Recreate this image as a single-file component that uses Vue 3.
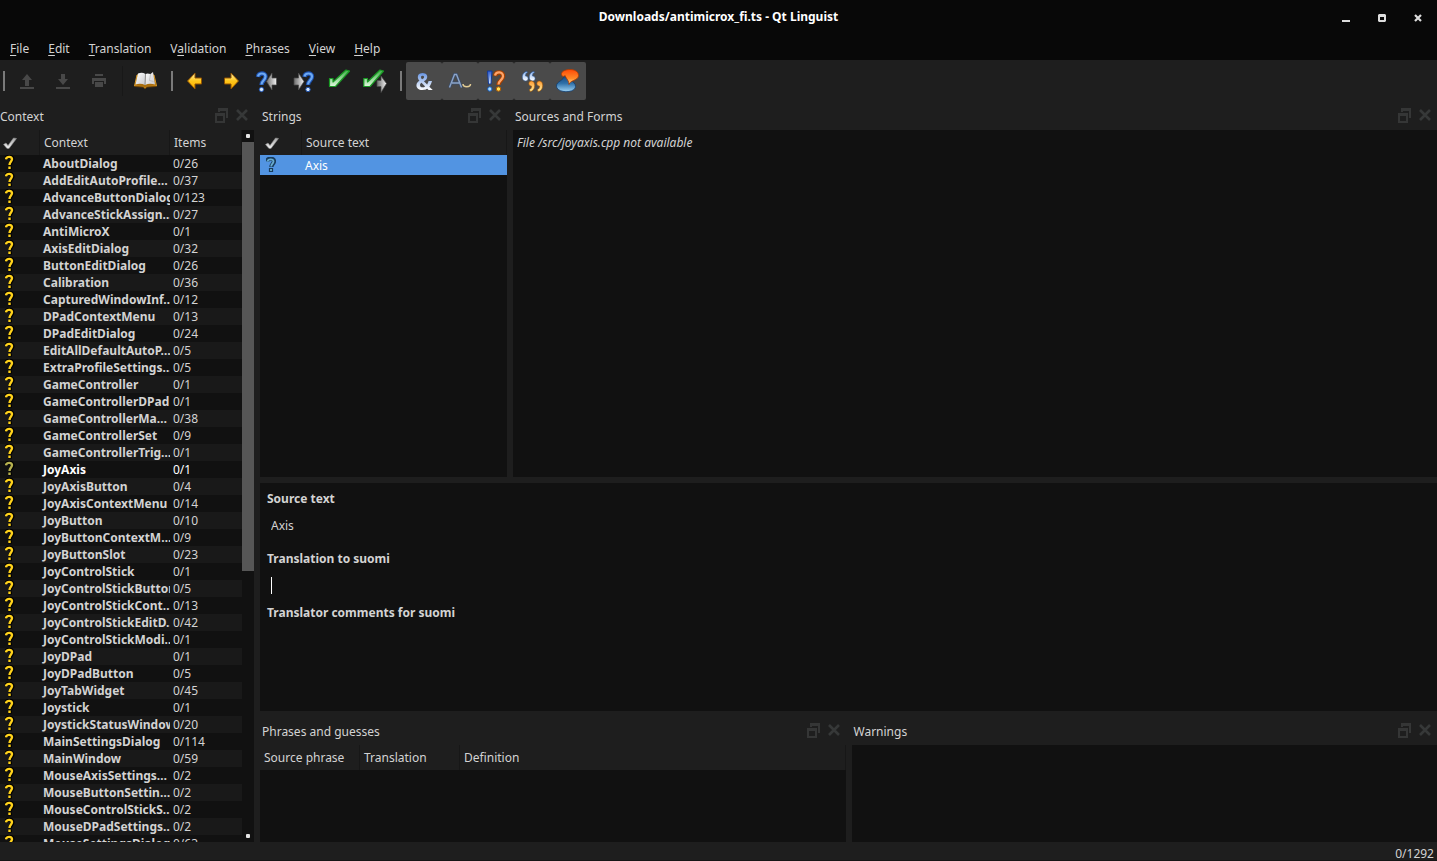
<script setup>
import { ref } from 'vue'

const menus = [
  ['', 'F', 'ile'],
  ['', 'E', 'dit'],
  ['', 'T', 'ranslation'],
  ['V', 'a', 'lidation'],
  ['', 'P', 'hrases'],
  ['', 'V', 'iew'],
  ['', 'H', 'elp'],
]

const navigation = [
  ['prev', 'Previous'],
  ['next', 'Next'],
  ['prev-unfinished', 'Previous unfinished'],
  ['next-unfinished', 'Next unfinished'],
  ['done', 'Mark as done'],
  ['done-next', 'Done and next'],
]

const checks = [
  ['accelerators', 'Accelerators'],
  ['whitespace', 'Surrounding whitespace'],
  ['punctuation', 'Ending punctuation'],
  ['phrase-matches', 'Phrase matches'],
  ['place-markers', 'Place marker matches'],
]

const contexts = [
  ['AboutDialog', '0/26'],
  ['AddEditAutoProfile…', '0/37'],
  ['AdvanceButtonDialog', '0/123'],
  ['AdvanceStickAssign…', '0/27'],
  ['AntiMicroX', '0/1'],
  ['AxisEditDialog', '0/32'],
  ['ButtonEditDialog', '0/26'],
  ['Calibration', '0/36'],
  ['CapturedWindowInf…', '0/12'],
  ['DPadContextMenu', '0/13'],
  ['DPadEditDialog', '0/24'],
  ['EditAllDefaultAutoP…', '0/5'],
  ['ExtraProfileSettings…', '0/5'],
  ['GameController', '0/1'],
  ['GameControllerDPad', '0/1'],
  ['GameControllerMa…', '0/38'],
  ['GameControllerSet', '0/9'],
  ['GameControllerTrig…', '0/1'],
  ['JoyAxis', '0/1'],
  ['JoyAxisButton', '0/4'],
  ['JoyAxisContextMenu', '0/14'],
  ['JoyButton', '0/10'],
  ['JoyButtonContextM…', '0/9'],
  ['JoyButtonSlot', '0/23'],
  ['JoyControlStick', '0/1'],
  ['JoyControlStickButton', '0/5'],
  ['JoyControlStickCont…', '0/13'],
  ['JoyControlStickEditD…', '0/42'],
  ['JoyControlStickModi…', '0/1'],
  ['JoyDPad', '0/1'],
  ['JoyDPadButton', '0/5'],
  ['JoyTabWidget', '0/45'],
  ['Joystick', '0/1'],
  ['JoystickStatusWindow', '0/20'],
  ['MainSettingsDialog', '0/114'],
  ['MainWindow', '0/59'],
  ['MouseAxisSettings…', '0/2'],
  ['MouseButtonSettin…', '0/2'],
  ['MouseControlStickS…', '0/2'],
  ['MouseDPadSettings…', '0/2'],
  ['MouseSettingsDialog', '0/63'],
]

const current = ref('JoyAxis')
const translation = ref('')
const comments = ref('')
</script>

<template>
  <div class="window">
    <svg class="defs" width="0" height="0" aria-hidden="true">
      <defs>
        <linearGradient id="gold" x1="0" y1="0" x2="0" y2="1">
          <stop offset="0" stop-color="#fff3b0" />
          <stop offset="0.5" stop-color="#ffc61a" />
          <stop offset="1" stop-color="#ffb000" />
        </linearGradient>
        <linearGradient id="silver" x1="0" y1="0" x2="1" y2="0">
          <stop offset="0" stop-color="#6e6e6e" />
          <stop offset="1" stop-color="#f4f4f4" />
        </linearGradient>
        <linearGradient id="green" x1="0" y1="0" x2="0" y2="1">
          <stop offset="0" stop-color="#3fae48" />
          <stop offset="1" stop-color="#e0fade" />
        </linearGradient>
        <linearGradient id="blue" x1="0" y1="0" x2="0" y2="1">
          <stop offset="0" stop-color="#2a58d0" />
          <stop offset="1" stop-color="#d8ecff" />
        </linearGradient>
        <linearGradient id="steel" x1="0" y1="0" x2="0" y2="1">
          <stop offset="0" stop-color="#8db4ec" />
          <stop offset="1" stop-color="#ffffff" />
        </linearGradient>
        <linearGradient id="amber" x1="0" y1="0" x2="0" y2="1">
          <stop offset="0" stop-color="#ff9a30" />
          <stop offset="1" stop-color="#fff0a0" />
        </linearGradient>
        <linearGradient id="fire" x1="0" y1="0" x2="0" y2="1">
          <stop offset="0" stop-color="#ff4a08" />
          <stop offset="0.6" stop-color="#ff8a28" />
          <stop offset="1" stop-color="#ffe9a0" />
        </linearGradient>
        <linearGradient id="ocean" x1="0" y1="0" x2="0" y2="1">
          <stop offset="0" stop-color="#12427c" />
          <stop offset="0.5" stop-color="#2f70a8" />
          <stop offset="1" stop-color="#9cd2f4" />
        </linearGradient>
        <linearGradient id="page" x1="0" y1="0" x2="1" y2="1">
          <stop offset="0" stop-color="#ffffff" />
          <stop offset="1" stop-color="#c8c8cc" />
        </linearGradient>
        <linearGradient id="metal" x1="0" y1="0" x2="0" y2="1">
          <stop offset="0" stop-color="#a8a8a8" />
          <stop offset="1" stop-color="#f0f0f0" />
        </linearGradient>
      </defs>

      <symbol id="i-open" viewBox="0 0 24 24">
        <path d="M12 5l5 6h-3v6h-4v-6H7zM5 18h14v2H5z" fill="#484848" />
      </symbol>
      <symbol id="i-save" viewBox="0 0 24 24">
        <path d="M10 5h4v5h3l-5 6-5-6h3zM5 18h14v2H5z" fill="#484848" />
      </symbol>
      <symbol id="i-print" viewBox="0 0 24 24">
        <path d="M8 5h8v2H8zM5 9h14v6h-2v-3H7v3H5zM8 13h8v5H8z" fill="#484848" />
      </symbol>
      <symbol id="i-book" viewBox="0 0 24 24">
        <path d="M4 6L1.500 17l8.500.5 2 2 2-2 9.500-.5L21 6z" fill="#a96d0c" stroke="#d99a26" stroke-linejoin="round" />
        <path d="M5 4.500c3-1 5-1 7.500.5L12 16c-3-1.500-6-1.500-9.500-.5z" fill="url(#page)" />
        <path d="M12.500 5c2-1 3-.5 5 0L20 3l2 12.500c-3.500-1-7-1-10 .5z" fill="url(#page)" />
        <path d="M12.500 5L12 16" stroke="#8c8c8c" />
        <path d="M17.500 5l-1 6.500 4 1" fill="none" stroke="#b4b4b4" stroke-width="0.700" />
        <path d="M2 17.500l8 .5 2 2 2-2 9-.5" fill="none" stroke="#6b4208" />
      </symbol>
      <symbol id="i-prev" viewBox="0 0 24 24">
        <path d="M4.500 12L12 4v5h6.500v6H12v5z" fill="url(#gold)" stroke="#925300" stroke-linejoin="round" />
      </symbol>
      <symbol id="i-next" viewBox="0 0 24 24">
        <path d="M19.500 12L12 4v5H5.500v6H12v5z" fill="url(#gold)" stroke="#925300" stroke-linejoin="round" />
      </symbol>
      <symbol id="i-prev-unfinished" viewBox="0 0 24 24">
        <path d="M11.500 12.500L17 4v5h4.500v7H17v5z" fill="url(#silver)" stroke="#4b4b4b" stroke-width="0.700" />
        <path d="M3 8c.5-4.500 7.500-4.500 7.500-.5 0 4-4 4-4 8.500" fill="none" stroke="#1c50ac" stroke-width="4.400" />
        <path d="M3 7.500c.5-4 7.500-4 7.500 0 0 4-4 4-4 8" fill="none" stroke="#6ca8f2" stroke-width="2.200" />
        <circle cx="6.500" cy="20.500" r="2.200" fill="#d4e8ff" stroke="#1c50ac" />
      </symbol>
      <symbol id="i-next-unfinished" viewBox="0 0 24 24">
        <path d="M13 12.500L7.500 4v5H3v7h4.500v5z" fill="url(#silver)" stroke="#4b4b4b" stroke-width="0.700" />
        <path d="M13.500 8c.5-4.500 7.500-4.500 7.500-.5 0 4-4 4-4 8.500" fill="none" stroke="#1c50ac" stroke-width="4.400" />
        <path d="M13.500 7.500c.5-4 7.500-4 7.500 0 0 4-4 4-4 8" fill="none" stroke="#6ca8f2" stroke-width="2.200" />
        <circle cx="17" cy="20.500" r="2.200" fill="#d4e8ff" stroke="#1c50ac" />
      </symbol>
      <symbol id="i-done" viewBox="0 0 24 24">
        <path d="M2.500 9.500h3.500v3.500L19 1l3.500 1L8.500 17.500H2.500z" fill="url(#green)" stroke="#1a9a24" stroke-width="1.200" stroke-linejoin="round" />
      </symbol>
      <symbol id="i-done-next" viewBox="0 0 24 24">
        <path d="M23.500 14.500l-5.500-7.500v4.500H14v6h4v6z" fill="url(#silver)" stroke="#4b4b4b" stroke-width="0.700" />
        <path d="M.8 9.500h3.700v3.500L17 1l3.500 1L7 17.500H.8z" fill="url(#green)" stroke="#1a9a24" stroke-width="1.200" stroke-linejoin="round" />
      </symbol>
      <symbol id="i-whitespace" viewBox="0 0 24 24">
        <path d="M1.500 18.500L6.500 5.500h2l5 13M4 14h7.500" fill="none" stroke="#3a4c68" stroke-width="2.800" />
        <path d="M1.500 18.500L6.500 5.500h2l5 13M4 14h7.500" fill="none" stroke="#8ca4c8" stroke-width="1.400" />
        <path d="M15 15c0 3.500 7.500 3.500 7.500 0" fill="none" stroke="#e2cc94" stroke-width="1.500" />
      </symbol>
      <symbol id="i-punctuation" viewBox="0 0 24 24">
        <path d="M3.500 2h4.500L7 15H4.500z" fill="url(#blue)" stroke="#123a9a" />
        <circle cx="5.800" cy="20" r="2.200" fill="#a6dcff" stroke="#1558b8" />
        <path d="M11 7c1-5 8.500-4.500 8 .5-.5 4-4.500 4-4.500 8.500" fill="none" stroke="#a64000" stroke-width="4.400" />
        <path d="M11 6.500c1-4.500 8.500-4 8 1-.5 4-4.500 4-4.500 8" fill="none" stroke="#ffa468" stroke-width="2.200" />
        <circle cx="14.500" cy="20" r="2.200" fill="#ffe35a" stroke="#b65c00" />
      </symbol>
      <symbol id="i-phrase-matches" viewBox="0 0 24 24">
        <g fill="url(#steel)" stroke="#2b5a9c" stroke-width="0.600">
          <path d="M7 2.500C1 3 1 12 5.500 12 9 12 9 7 5.500 7c0-2 .5-3 2-3.500z" />
          <path d="M14 2.500C8 3 8 12 12.500 12 16 12 16 7 12.500 7c0-2 .5-3 2-3.500z" />
        </g>
        <g fill="url(#amber)" stroke="#a65800" stroke-width="0.600">
          <path d="M10 22.500c6-.5 6-10.500 1.500-10.500C8 12 8 17 11.500 17c0 2-.5 3-2 3.500z" />
          <path d="M18 22.500c6-.5 6-10.500 1.500-10.500C16 12 16 17 19.500 17c0 2-.5 3-2 3.500z" />
        </g>
      </symbol>
      <symbol id="i-place-markers" viewBox="0 0 24 24">
        <path d="M8.500 6c.5 5 11 5 11 11.500 0 7-19 7-19-.5C.5 12 8 12 8.500 6z" fill="url(#ocean)" stroke="#123e70" stroke-width="0.800" />
        <path d="M13 15.500C13.500 12.500 10.500 10 9 6.500 8 8 5.500 7.500 5.500 5c0-5.500 17-7 17 1.500C22.500 11.500 14 11 13 15.500z" fill="url(#fire)" stroke="#b33b00" stroke-width="0.800" />
      </symbol>
      <symbol id="i-tick" viewBox="0 0 16 14">
        <path d="M1.500 8.500L4 7l2 2.500L11.500 2l3 .5-7.500 10H5z" fill="url(#metal)" stroke="#8c8c8c" stroke-width="0.600" />
      </symbol>
      <symbol id="i-question" viewBox="0 0 10 15">
        <path d="M1 4.500C1.500.8 8 .8 7.500 4.500 7 7 5 7 5 10.500M5 11.500v3" fill="none" stroke="#000" stroke-width="4" />
        <path d="M1 4.300C1.500 1.200 7.200 1 7 4.300 6.800 6.800 4.500 7 4.500 10M4.500 11.500v2.500" fill="none" stroke="currentColor" stroke-width="2.400" />
      </symbol>
      <symbol id="i-question-outline" viewBox="0 0 10 15">
        <path d="M1 4.500C1.500.8 8.300.8 8 4.500 7.500 7 5.400 7 5.400 10M5 11v4" fill="none" stroke="#183c5c" stroke-width="4.200" />
        <path d="M1.500 4.500C2 1.600 7.500 1.600 7.500 4.500 7 7 5.200 7 5.200 9.500M5 12v2" fill="none" stroke="#68acd0" stroke-width="1.800" />
      </symbol>
      <symbol id="i-float" viewBox="0 0 14 15">
        <path d="M3 0h10v10h-2V3H5v1H3zM0 5h10v10H0zM2 8v5h6V8z" fill="#353636" fill-rule="evenodd" />
      </symbol>
      <symbol id="i-close" viewBox="0 0 14 14">
        <path d="M2 2l10 10M12 2L2 12" stroke="#363838" stroke-width="2.600" />
      </symbol>
    </svg>

    <header class="titlebar">
      <h1>Downloads/antimicrox_fi.ts - Qt Linguist</h1>
      <div class="controls">
        <button aria-label="Minimize"><svg width="8" height="8"><path d="M0 6h8v2H0z" fill="#ddd" /></svg></button>
        <button aria-label="Maximize"><svg width="8" height="8"><path d="M0 1l1-1h6l1 1v6l-1 1H1L0 7zM2 3v3h4V3z" fill="#ddd" fill-rule="evenodd" /></svg></button>
        <button aria-label="Close"><svg width="8" height="8"><path d="M1 1l6 6M7 1L1 7" stroke="#ddd" stroke-width="2.200" /></svg></button>
      </div>
    </header>

    <nav class="menubar">
      <button v-for="[before, key, after] in menus" :key="after">{{ before }}<span class="mnemonic">{{ key }}</span>{{ after }}</button>
    </nav>

    <div class="toolbar">
      <div class="group">
        <span class="handle"></span>
        <button class="tool" aria-label="Open" disabled><svg><use href="#i-open" /></svg></button>
        <button class="tool" aria-label="Save" disabled><svg><use href="#i-save" /></svg></button>
        <button class="tool" aria-label="Print" disabled><svg><use href="#i-print" /></svg></button>
        <span class="separator"></span>
        <button class="tool" aria-label="Open phrase book"><svg><use href="#i-book" /></svg></button>
      </div>
      <div class="group">
        <span class="handle"></span>
        <button v-for="[icon, label] in navigation" :key="icon" class="tool" :aria-label="label">
          <svg><use :href="'#i-' + icon" /></svg>
        </button>
      </div>
      <div class="group">
        <span class="handle"></span>
        <button v-for="[icon, label] in checks" :key="icon" class="tool pressed" :aria-label="label" aria-pressed="true">
          <span v-if="icon === 'accelerators'" class="ampersand">&amp;</span>
          <svg v-else><use :href="'#i-' + icon" /></svg>
        </button>
      </div>
    </div>

    <main class="workspace">
      <section class="dock context">
        <div class="dock-title">
          <h2>Context</h2>
          <button aria-label="Float Context"><svg class="float"><use href="#i-float" /></svg></button>
          <button aria-label="Close Context"><svg class="close"><use href="#i-close" /></svg></button>
        </div>
        <div class="dock-body scrollable">
          <table class="context-table">
            <colgroup><col class="col-state"><col class="col-name"><col></colgroup>
            <thead>
              <tr>
                <th class="state" aria-label="State"><svg class="tick"><use href="#i-tick" /></svg></th>
                <th>Context</th>
                <th>Items</th>
              </tr>
            </thead>
            <tbody>
              <tr v-for="[name, items] in contexts" :key="name" :class="{ current: name === current }" @click="current = name">
                <td><svg class="question"><use href="#i-question" /></svg></td>
                <td class="name">{{ name }}</td>
                <td>{{ items }}</td>
              </tr>
            </tbody>
          </table>
          <div class="scrollbar">
            <span class="arrow"></span>
            <div class="track"><div class="thumb"></div></div>
            <span class="arrow"></span>
          </div>
        </div>
      </section>

      <div class="main-column">
        <div class="row">
          <section class="dock strings">
            <div class="dock-title">
              <h2>Strings</h2>
              <button aria-label="Float Strings"><svg class="float"><use href="#i-float" /></svg></button>
              <button aria-label="Close Strings"><svg class="close"><use href="#i-close" /></svg></button>
            </div>
            <div class="dock-body">
              <table class="strings-table">
                <colgroup><col class="col-state"><col></colgroup>
                <thead>
                  <tr>
                    <th aria-label="State"><svg class="tick"><use href="#i-tick" /></svg></th>
                    <th>Source text</th>
                  </tr>
                </thead>
                <tbody>
                  <tr class="selected">
                    <td><svg class="question"><use href="#i-question-outline" /></svg></td>
                    <td>Axis</td>
                  </tr>
                </tbody>
              </table>
            </div>
          </section>

          <section class="dock sources">
            <div class="dock-title">
              <h2>Sources and Forms</h2>
              <button aria-label="Float Sources and Forms"><svg class="float"><use href="#i-float" /></svg></button>
              <button aria-label="Close Sources and Forms"><svg class="close"><use href="#i-close" /></svg></button>
            </div>
            <div class="dock-body">
              <p class="notice">File /src/joyaxis.cpp not available</p>
            </div>
          </section>
        </div>

        <form class="editor" @submit.prevent>
          <label for="source">Source text</label>
          <input id="source" class="field" type="text" value="Axis" readonly>
          <label for="translation">Translation to suomi</label>
          <div class="caret-field">
            <input id="translation" v-model="translation" class="field" type="text">
            <span v-if="!translation" class="caret"></span>
          </div>
          <label for="comments">Translator comments for suomi</label>
          <textarea id="comments" v-model="comments" class="field"></textarea>
        </form>

        <div class="row">
          <section class="dock">
            <div class="dock-title">
              <h2>Phrases and guesses</h2>
              <button aria-label="Float Phrases and guesses"><svg class="float"><use href="#i-float" /></svg></button>
              <button aria-label="Close Phrases and guesses"><svg class="close"><use href="#i-close" /></svg></button>
            </div>
            <div class="dock-body">
              <table class="phrases-table">
                <colgroup><col class="col-phrase"><col class="col-phrase"><col></colgroup>
                <thead>
                  <tr><th>Source phrase</th><th>Translation</th><th>Definition</th></tr>
                </thead>
              </table>
            </div>
          </section>

          <section class="dock">
            <div class="dock-title">
              <h2>Warnings</h2>
              <button aria-label="Float Warnings"><svg class="float"><use href="#i-float" /></svg></button>
              <button aria-label="Close Warnings"><svg class="close"><use href="#i-close" /></svg></button>
            </div>
            <div class="dock-body"></div>
          </section>
        </div>
      </div>
    </main>

    <footer class="statusbar">0/1292</footer>
  </div>
</template>

<style>
body {
  background: #1e1e1e;
}
</style>

<style scoped>
.window {
  display: flex;
  flex-direction: column;
  height: 100vh;
  overflow: hidden;
  background: #1e1e1e;
  color: #d3d3d3;
  font: 12px/17px "Noto Sans", sans-serif;
}
.window * {
  box-sizing: border-box;
}
.defs {
  position: absolute;
}
button {
  padding: 0;
  border: 0;
  background: none;
  color: inherit;
  font: inherit;
}
h1,
h2,
p {
  margin: 0;
  font-size: 12px;
}
svg {
  display: block;
}

.titlebar {
  display: grid;
  grid-template-columns: 1fr auto 1fr;
  flex: none;
  height: 36px;
  background: #080808;
}
.titlebar h1 {
  grid-column: 2;
  color: #fff;
  font-weight: 700;
  line-height: 34px;
}
.controls {
  display: flex;
  justify-content: flex-end;
  padding-right: 1px;
}
.controls button {
  display: grid;
  place-items: center;
  width: 36px;
  height: 36px;
}
.menubar {
  display: flex;
  flex: none;
  height: 24px;
  padding-left: 1px;
  background: #080808;
}
.menubar button {
  padding: 0 10px 0 9px;
}
.mnemonic {
  text-decoration: underline;
  text-decoration-thickness: 1px;
  text-underline-offset: 2px;
}

.toolbar {
  display: flex;
  flex: none;
  gap: 5px;
  height: 42px;
  padding: 2px 0 2px 3px;
}
.group {
  display: flex;
  align-items: center;
  padding-right: 3px;
}
.group:nth-child(2) {
  padding-right: 2px;
}
.handle {
  width: 2px;
  height: 20px;
  margin-right: 4px;
  background: #7a7a7a;
}
.separator {
  width: 1px;
  height: 30px;
  margin: 0 4px 0 5px;
  background: #181818;
}
.tool {
  display: grid;
  place-items: center;
  width: 36px;
  height: 38px;
}
.tool svg {
  width: 24px;
  height: 24px;
}
.pressed {
  border-radius: 2px;
  background: #4a4a4a;
}
.ampersand {
  background: linear-gradient(#6c98e4 25%, #ffffff 80%);
  background-clip: text;
  color: transparent;
  font: 700 23px/30px "Noto Sans", sans-serif;
}

.workspace {
  display: flex;
  flex: 1;
  gap: 6px;
  min-height: 0;
}
.dock {
  display: flex;
  flex: 1;
  flex-direction: column;
  min-width: 0;
  min-height: 0;
}
.context {
  flex: 0 0 254px;
}
.strings {
  flex: 0 0 247px;
}
.main-column {
  display: grid;
  flex: 1;
  grid-template-rows: minmax(0, 375fr) minmax(0, 228fr) minmax(0, 125fr);
  gap: 6px;
  min-width: 0;
}
.row {
  display: flex;
  gap: 6px;
  min-height: 0;
}
.dock-title {
  display: flex;
  flex: none;
  gap: 6px;
  height: 28px;
  padding: 0 5px 0 2px;
  line-height: 30px;
}
.context .dock-title {
  padding-left: 0;
}
.dock-title h2 {
  flex: 1;
  font-weight: 400;
}
.dock-title button {
  height: 26px;
}
.float {
  width: 14px;
  height: 15px;
}
.close {
  width: 14px;
  height: 14px;
}
.dock-body {
  flex: 1;
  min-height: 0;
  overflow: hidden;
  background: #111;
}
.scrollable {
  display: flex;
}
table {
  width: 100%;
  border-collapse: collapse;
  table-layout: fixed;
}
.context-table {
  flex: 1;
  align-self: flex-start;
  width: 0;
}
.context-table .col-state {
  width: 40px;
}
.context-table .col-name {
  width: 130px;
}
.strings-table .col-state {
  width: 42px;
}
.col-phrase {
  width: 100px;
}
thead tr {
  height: 25px;
  background: #1e1e1e;
}
th {
  padding: 0 0 0 4px;
  box-shadow: inset -1px 0 #171717;
  font-weight: 400;
  text-align: left;
}
.state {
  padding-left: 2px;
}
td {
  height: 17px;
  padding: 0 0 0 3px;
  overflow: hidden;
  white-space: nowrap;
}
tbody tr:nth-child(even) {
  background: #191919;
}
.name {
  font-weight: 700;
}
.current {
  color: #fff;
}
.tick {
  width: 16px;
  height: 14px;
}
.question {
  width: 10px;
  height: 15px;
  margin: 0 0 2px 2px;
  color: #ffd21c;
}
.current .question {
  color: #b5b04f;
}
.selected {
  background: #5294e2;
  color: #fff;
}
.selected td {
  height: 20px;
}
.selected .question {
  margin-left: 3px;
}
.scrollbar {
  display: flex;
  flex-direction: column;
  align-items: center;
  width: 12px;
}
.arrow {
  width: 4px;
  height: 4px;
  margin: 4px;
  border-radius: 1px;
  background: #e4e4e4;
}
.track {
  flex: 1;
  width: 12px;
}
.thumb {
  height: 62.4%;
  background: #565656;
}
.notice {
  padding: 4px;
  font-style: italic;
}

.editor {
  display: flex;
  flex-direction: column;
  min-height: 0;
  padding: 6px 7px;
  background: #111;
}
.editor label {
  flex: none;
  height: 18px;
  font-weight: 700;
  line-height: 20px;
}
.field {
  display: block;
  flex: none;
  width: 100%;
  height: 24px;
  margin: 6px 0 12px;
  padding: 0 4px;
  border: 0;
  outline: 0;
  background: none;
  color: inherit;
  font: inherit;
  resize: none;
}
.caret-field {
  position: relative;
}
.caret-field .field {
  margin-bottom: 6px;
}
.caret {
  position: absolute;
  top: 10px;
  left: 4px;
  width: 1px;
  height: 17px;
  background: #fff;
}
textarea.field {
  flex: 1;
  min-height: 0;
  margin-bottom: 0;
}
.statusbar {
  flex: none;
  height: 19px;
  padding: 3px 3px 0;
  border-bottom: 1px solid #151515;
  text-align: right;
}
</style>
